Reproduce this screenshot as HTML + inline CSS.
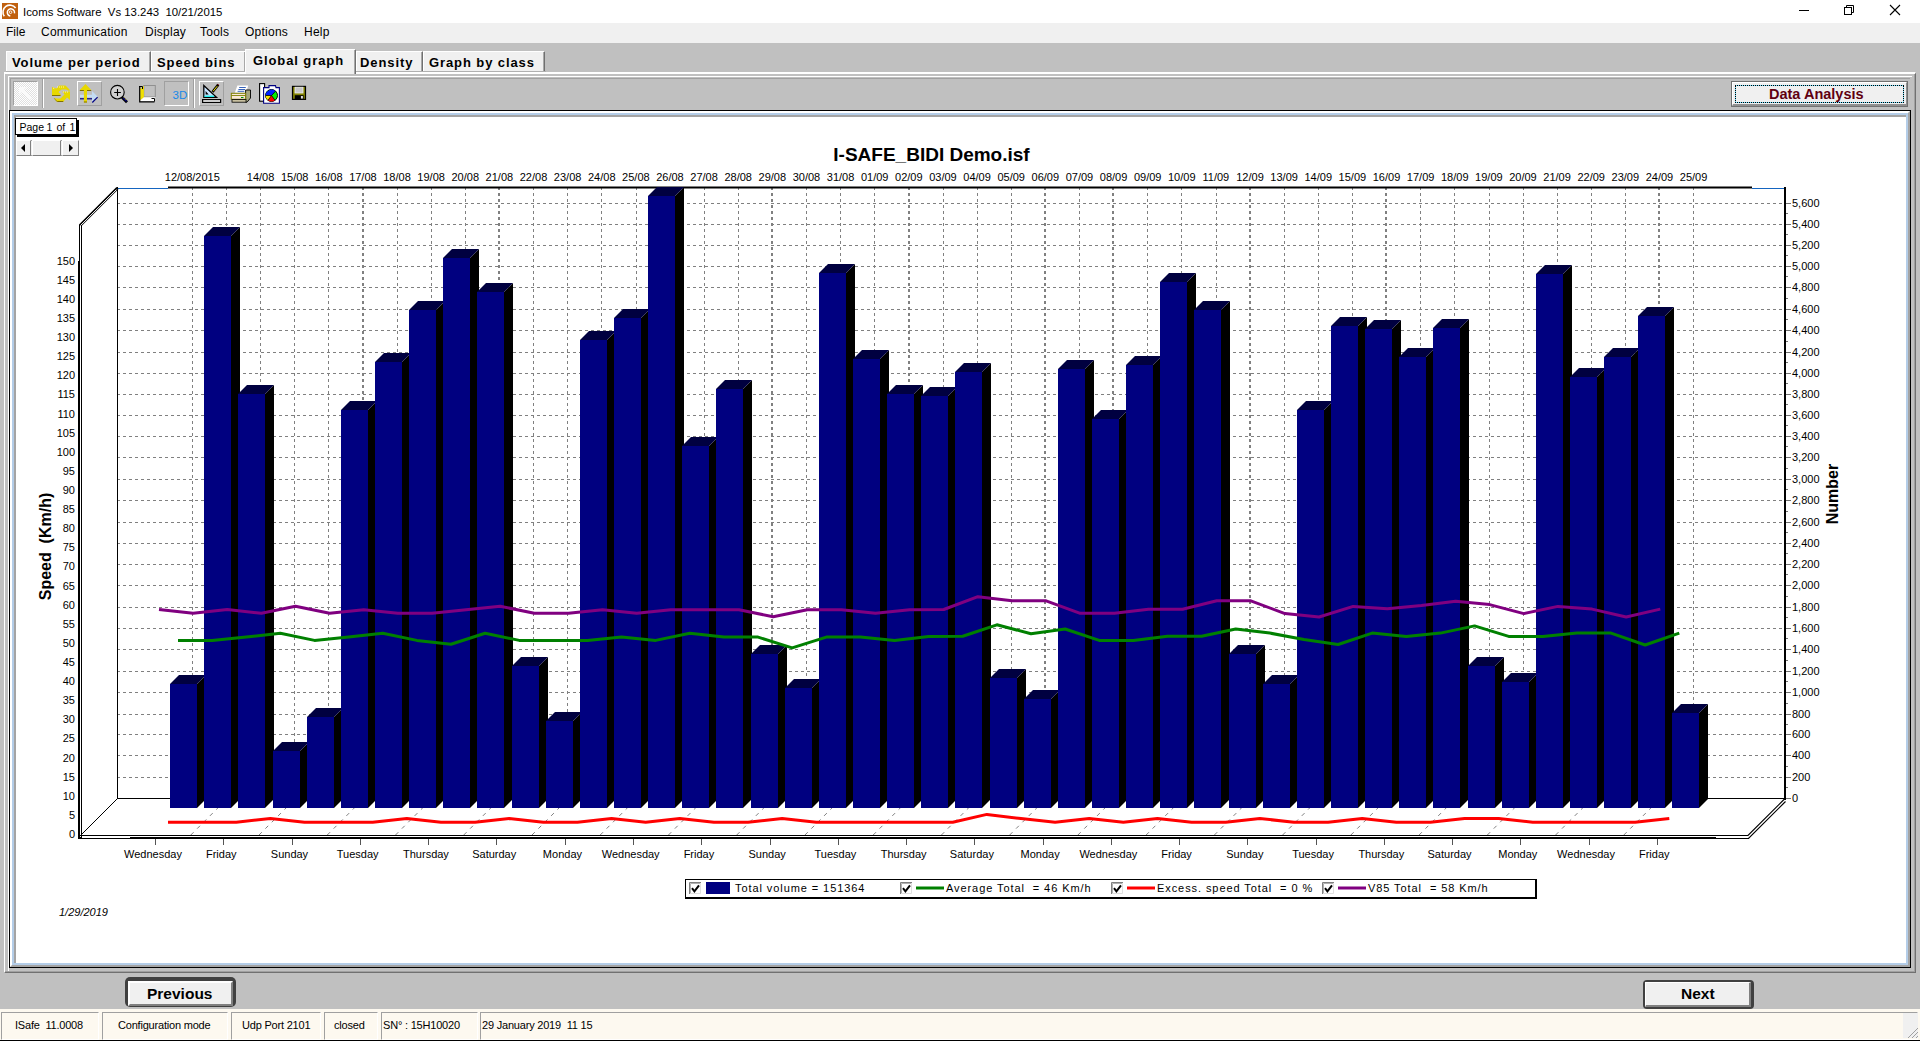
<!DOCTYPE html>
<html><head><meta charset="utf-8">
<style>
html,body{margin:0;padding:0;}
body{width:1920px;height:1041px;position:relative;overflow:hidden;background:#c0c0c0;font-family:"Liberation Sans",sans-serif;}
.a{position:absolute;box-sizing:border-box;}
.txt{position:absolute;white-space:pre;line-height:1;}
#title{left:0;top:0;width:1920px;height:23px;background:#fff;}
#menu{left:0;top:23px;width:1920px;height:20px;background:#f0f0f0;}
.mi{position:absolute;top:25px;font-size:12px;color:#000;white-space:pre;line-height:14px;}
.tab{position:absolute;top:51px;height:21px;background:#f0f0f0;border-top:1px solid #fff;border-left:1px solid #fff;border-right:1px solid #707070;box-shadow:inset -1px 0 0 #a8a8a8;box-sizing:border-box;}
.tabt{position:absolute;font:bold 13px "Liberation Sans",sans-serif;letter-spacing:0.9px;color:#000;white-space:pre;line-height:15px;}
.st{position:absolute;top:1012px;height:28px;border-top:1px solid #a0a0a0;border-left:1px solid #a0a0a0;border-right:1px solid #fff;border-bottom:1px solid #fff;box-sizing:border-box;}
.stt{position:absolute;top:1019px;font-size:11px;letter-spacing:-0.2px;color:#000;white-space:pre;line-height:13px;}
svg text.t{font:11px "Liberation Sans",sans-serif;fill:#000;}
svg text.lg{font:11px "Liberation Sans",sans-serif;fill:#000;letter-spacing:0.92px;white-space:pre;}
svg line.g{stroke:#808080;stroke-width:1;stroke-dasharray:3 3;shape-rendering:crispEdges;}
svg line.tk{stroke:#707070;stroke-width:1;}
svg line.gd{stroke:#808080;stroke-width:1;stroke-dasharray:4 5;}
</style></head>
<body>
<!-- title bar -->
<div class="a" id="title"></div>
<svg class="a" style="left:0;top:0" width="20" height="22">
  <rect x="2" y="3" width="16" height="16" fill="#c0600e"/>
  <path d="M4.3 16.2 A6.9 6.9 0 0 1 15.6 8" fill="none" stroke="#fff" stroke-width="1.6"/>
  <path d="M10.3 16 A3.6 3.6 0 1 1 14.4 13.4" fill="none" stroke="#fff" stroke-width="1.5"/>
  <circle cx="10.6" cy="12.2" r="1.3" fill="none" stroke="#fff" stroke-width="0.9"/>
</svg>
<div class="txt" style="left:23px;top:7px;font-size:11.4px;color:#000">Icoms Software  Vs 13.243  10/21/2015</div>
<svg class="a" style="left:1790px;top:0" width="130" height="23">
  <line x1="9" y1="10.5" x2="19" y2="10.5" stroke="#000" stroke-width="1"/>
  <rect x="54.5" y="7.5" width="7" height="7" fill="none" stroke="#000"/>
  <path d="M56.5 7.5 V5.5 H63.5 V12.5 H61.5" fill="none" stroke="#000"/>
  <path d="M100 5 L110 15 M110 5 L100 15" stroke="#000" stroke-width="1.1"/>
</svg>
<!-- menu -->
<div class="a" id="menu"></div>
<div class="mi" style="left:6px">File</div>
<div class="mi" style="left:41px;letter-spacing:0.25px">Communication</div>
<div class="mi" style="left:145px;letter-spacing:0.25px">Display</div>
<div class="mi" style="left:200px;letter-spacing:0.25px">Tools</div>
<div class="mi" style="left:245px;letter-spacing:0.25px">Options</div>
<div class="mi" style="left:304px;letter-spacing:0.25px">Help</div>

<!-- tab panel outer -->
<div class="a" style="left:4px;top:72px;width:1912px;height:901px;border-top:2px solid #fff;border-left:1px solid #fff;border-right:1px solid #707070;border-bottom:1px solid #707070;background:#c0c0c0"></div>
<div class="a" style="left:5px;top:74px;width:1910px;height:898px;border-right:1px solid #a0a0a0;border-bottom:1px solid #a0a0a0;"></div>
<div class="a" style="left:8px;top:76px;width:1904px;height:895px;border-top:1px solid #fff;border-left:1px solid #fff;"></div>
<div class="a" style="left:10px;top:78px;width:1900px;height:32px;border-top:1px solid #a0a0a0;border-left:1px solid #a0a0a0;"></div>

<!-- tabs -->
<div class="tab" style="left:6px;width:145px"></div>
<div class="tab" style="left:151px;width:95px"></div>
<div class="tab" style="left:356px;width:67px"></div>
<div class="tab" style="left:423px;width:122px"></div>
<div class="a" style="left:6px;top:71px;width:540px;height:1px;background:#b0b0b0"></div>
<div class="a" style="left:245px;top:49px;width:111px;height:25px;background:#f0f0f0;border-top:1px solid #fff;border-left:1px solid #fff;border-right:1px solid #707070;box-shadow:inset -1px 0 0 #a8a8a8"></div>
<div class="tabt" style="left:12px;top:55px">Volume per period</div>
<div class="tabt" style="left:157px;top:55px">Speed bins</div>
<div class="tabt" style="left:253px;top:53px">Global graph</div>
<div class="tabt" style="left:360px;top:55px">Density</div>
<div class="tabt" style="left:429px;top:55px">Graph by class</div>

<!-- toolbar -->
<div class="a" style="left:13px;top:81px;width:25px;height:25px;border-top:1px solid #a0a0a0;border-left:1px solid #a0a0a0;border-right:1px solid #fff;border-bottom:1px solid #fff;background-color:#fff;background-image:repeating-conic-gradient(#e0e0e0 0 25%, #fff 0 50%);background-size:2px 2px"></div>
<svg class="a" style="left:16px;top:84px" width="20" height="20"><path d="M3 3 H11 L8 6 L16 14 L14 16 L6 8 L3 11 Z" fill="#fafafa"/></svg>
<div class="a" style="left:42px;top:79px;width:1px;height:29px;background:#a0a0a0"></div>
<div class="a" style="left:43px;top:79px;width:1px;height:29px;background:#fff"></div>
<div class="a" style="left:77px;top:81px;width:25px;height:25px;border-top:1px solid #fff;border-left:1px solid #fff;border-right:1px solid #a0a0a0;border-bottom:1px solid #a0a0a0;"></div>
<div class="a" style="left:164px;top:81px;width:25px;height:25px;border-top:1px solid #a0a0a0;border-left:1px solid #a0a0a0;border-right:1px solid #fff;border-bottom:1px solid #fff;"></div>
<div class="a" style="left:193px;top:79px;width:1px;height:29px;background:#a0a0a0"></div>
<div class="a" style="left:194px;top:79px;width:1px;height:29px;background:#fff"></div>
<div class="a" style="left:199px;top:81px;width:25px;height:25px;border-top:1px solid #fff;border-left:1px solid #fff;border-right:1px solid #a0a0a0;border-bottom:1px solid #a0a0a0;"></div>
<svg class="a" style="left:0;top:0" width="320" height="115">
  <!-- refresh icon -->
  <path d="M52 87 L56.5 88.5 L59 85.5 L65.5 85.5 L69.5 89.5 L69.5 91 L66 89.5 L61.5 89.5 L58.5 92 L60.5 94 L60.5 96 L52 96 Z" fill="#e8d800"/>
  <path d="M52 95 H60.5 V96 H52 Z" fill="#807000"/>
  <path d="M62 91.5 L70 91.5 L70 100 L67 97.5 L63 102 L57 102 L54 98 L58 98.5 L60.5 98.5 L64.5 94.5 Z" fill="#e8d800"/>
  <path d="M57 101 H63.5 L63 102 H57.5 Z M54 98 L57 101 L56.5 101.5 L53.8 98.3 Z" fill="#807000"/>
  <path d="M53 88 L55 89 M57 87 H65 M63 92 H69" stroke="#fff" stroke-width="0.7" stroke-dasharray="1 1"/>
  <!-- T arrow -->
  <path d="M80 94.8 H92.5 V97.3 H80 Z" fill="#c4dcf4"/>
  <path d="M92 91 L97.7 96.8 L92 102.6 Z" fill="#c4dcf4"/>
  <path d="M80 98.8 H92" stroke="#000080" stroke-width="1.2"/>
  <path d="M97.6 97.2 L92.3 102.5" stroke="#000080" stroke-width="1.2"/>
  <path d="M85.5 84 L79.8 90 H83.9 V102.5 H87 V90 H91.2 Z" fill="#e8d800"/>
  <path d="M79.8 90 H83.9 V91 H79.8 Z M87 90 H91.2 V91 H87 Z M83.9 101.6 H87 V102.6 H83.9 Z" fill="#807000"/>
  <!-- zoom -->
  <circle cx="117.4" cy="92.2" r="6.8" fill="#d0d0d0" stroke="#000" stroke-width="1.1"/>
  <path d="M114.2 92.5 H120.9 M117.5 89 V95.9" stroke="#000" stroke-width="1.1"/>
  <path d="M122 97.2 L127 102.2" stroke="#000" stroke-width="2.8"/>
  <path d="M122.8 97.6 L126.6 101.4" stroke="#000090" stroke-width="1.2"/>
  <path d="M123.6 97.2 L127 100.6" stroke="#e8d800" stroke-width="0.8" stroke-dasharray="0.8 0.8"/>
  <!-- axis icon -->
  <rect x="143.8" y="85.5" width="11.5" height="11.5" fill="none" stroke="#909090" stroke-width="1"/>
  <path d="M140.2 88.7 L143.9 85.8 V97.2 L140.2 100.4 Z" fill="#f0e000"/>
  <path d="M140.2 100.4 L143.9 97.2 H155.5 L154.5 101 H140.2 Z" fill="#fff"/>
  <path d="M139.7 87 V101.8 H154.5" fill="none" stroke="#000" stroke-width="1.2"/>
  <path d="M139 86.5 H142.5 V89 M151.5 98.5 H154.5 V101.5" fill="none" stroke="#000" stroke-width="1"/>
  <!-- 3D -->
  <text x="172.5" y="99" style="font:11.5px 'Liberation Sans',sans-serif;fill:#1888e8">3D</text>
  <!-- set square -->
  <path d="M203.8 85.5 V97.3 H216.5 Z" fill="#c8e4ff" stroke="#000" stroke-width="1.3" stroke-linejoin="miter"/>
  <rect x="204.5" y="95.6" width="9.5" height="1.4" fill="#20f0f0"/>
  <path d="M205.6 91 V94.6 H208.7 Z" fill="#000"/>
  <rect x="202.6" y="99.6" width="18" height="2.8" fill="#fff" stroke="#000" stroke-width="1.2"/>
  <path d="M212.5 92 L218.3 84.6" stroke="#000" stroke-width="2.6"/>
  <path d="M213.2 91.2 L217.2 86.2" stroke="#f0e000" stroke-width="1"/>
  <path d="M217.2 84.2 L219 84.6 L218.4 85.6 Z" fill="#a00000"/>
  <!-- printer -->
  <path d="M237.4 85.6 H248.2 L246.1 92.8 H234.8 Z" fill="#fff"/>
  <path d="M239.2 87.5 H245.8 M238.4 89.5 H245 M237.6 91.3 H244.3" stroke="#2050b0" stroke-width="0.9"/>
  <path d="M245.6 90 H250.5 V98 L247 102.2 H245.6 Z" fill="#a8a880" stroke="#000" stroke-width="0.9"/>
  <rect x="231.3" y="93.3" width="14.3" height="6" fill="#f8e8d8" stroke="#808000" stroke-width="1"/>
  <path d="M231.3 95.5 H245.6" stroke="#808000" stroke-width="0.9"/>
  <path d="M241 97.5 H243.5" stroke="#009000" stroke-width="1"/>
  <rect x="232" y="99.6" width="14" height="2.6" fill="#c8c0a0" stroke="#000" stroke-width="0.8"/>
  <!-- pie icon -->
  <rect x="259.6" y="83.6" width="5" height="17.6" fill="#fff" stroke="#000" stroke-width="1.1"/>
  <path d="M263.6 87.6 H269 V85.6 H275.5 L276 87.6 H279.4 V103.3 H263.6 Z" fill="#fff" stroke="#000080" stroke-width="1.1"/>
  <circle cx="271.5" cy="95.5" r="6" fill="#00f000" stroke="#000" stroke-width="1"/>
  <path d="M271.5 95.5 L265.6 95.5 A6 6 0 0 1 275.6 91.2 Z" fill="#0020ff"/>
  <path d="M271.5 95.5 L275 100.3 A6 6 0 0 1 268 100.3 Z" fill="#ff0000"/>
  <path d="M271.5 95.5 L268 100.3 A6 6 0 0 1 265.6 95.5 Z" fill="#ffe000"/>
  <path d="M265.6 95.5 H271.5 L275.6 91.2 M271.5 95.5 L268 100.3 M271.5 95.5 L275 100.3" fill="none" stroke="#000" stroke-width="0.8"/>
  <!-- floppy -->
  <rect x="292.5" y="86.4" width="13" height="13" fill="#808000" stroke="#000" stroke-width="1.2"/>
  <rect x="295" y="87.2" width="8" height="5.8" fill="#c8c8c8" stroke="#f0f0f0" stroke-width="0.8"/>
  <rect x="294.8" y="95.2" width="8.8" height="4" fill="#000"/>
  <rect x="300.9" y="96" width="2" height="2.6" fill="#e0e0e0"/>
</svg>
<!-- Data Analysis button -->
<div class="a" style="left:1731px;top:81px;width:177px;height:26px;background:#f0f0f0;border:1px solid #707070"></div>
<div class="a" style="left:1732px;top:82px;width:175px;height:24px;border-top:1px solid #fff;border-left:1px solid #fff;border-right:1px solid #909090;border-bottom:2px solid #909090"></div>
<div class="a" style="left:1735px;top:85px;width:169px;height:18px;border:1px solid #70e0ff"></div>
<div class="a" style="left:1735px;top:85px;width:169px;height:18px;border:1px dotted #000"></div>
<div class="txt" style="left:1769px;top:86px;font:bold 14.5px 'Liberation Sans',sans-serif;color:#600010">Data Analysis</div>

<!-- chart panel -->
<div class="a" style="left:9px;top:110px;width:1902px;height:858px;border:1px solid #000;background:#fff"></div>
<div class="a" style="left:10px;top:111px;width:1900px;height:856px;border-top:2px solid #fff;border-left:2px solid #fff;border-right:2px solid #a4a4a4;border-bottom:2px solid #a4a4a4;"></div>
<div class="a" style="left:12px;top:113px;width:1896px;height:852px;border:2px solid #b4cde8;"></div>
<div class="a" style="left:14px;top:115px;width:1892px;height:848px;border-top:2px solid #a4a4a4;border-left:2px solid #a4a4a4;"></div>
<!-- page box -->
<div class="a" style="left:17px;top:120px;width:62px;height:17px;background:#000"></div>
<div class="a" style="left:15px;top:118px;width:62px;height:17px;background:#fff;border:1px solid #000"></div>
<div class="txt" style="left:19.5px;top:122px;font-size:10.5px">Page</div>
<div class="txt" style="left:46.5px;top:122px;font-size:10.5px">1</div>
<div class="txt" style="left:56.5px;top:122px;font-size:10.5px">of</div>
<div class="txt" style="left:69.5px;top:122px;font-size:10.5px">1</div>
<div class="a" style="left:16px;top:140px;width:63px;height:16px;background:#f0f0f0;border:1px solid #a0a0a0"></div>
<div class="a" style="left:16px;top:140px;width:15px;height:16px;background:#f0f0f0;border-top:1px solid #fff;border-left:1px solid #fff;border-right:1px solid #808080;border-bottom:1px solid #808080"></div>
<div class="a" style="left:32px;top:140px;width:29px;height:16px;background:#f0f0f0;border-top:1px solid #fff;border-left:1px solid #fff;border-right:1px solid #808080;border-bottom:1px solid #808080"></div>
<div class="a" style="left:62px;top:140px;width:17px;height:16px;background:#f0f0f0;border-top:1px solid #fff;border-left:1px solid #fff;border-right:1px solid #808080;border-bottom:1px solid #808080"></div>
<svg class="a" style="left:16px;top:140px" width="64" height="16"><path d="M9 4 V12 L5 8 Z M53 4 V12 L57 8 Z" fill="#000"/></svg>

<!-- chart -->
<svg class="a" style="left:0;top:0" width="1920" height="1041">
<line x1="117" y1="777.5" x2="1784" y2="777.5" class="g"/>
<line x1="117" y1="755.5" x2="1784" y2="755.5" class="g"/>
<line x1="117" y1="734.5" x2="1784" y2="734.5" class="g"/>
<line x1="117" y1="714.5" x2="1784" y2="714.5" class="g"/>
<line x1="117" y1="692.5" x2="1784" y2="692.5" class="g"/>
<line x1="117" y1="671.5" x2="1784" y2="671.5" class="g"/>
<line x1="117" y1="649.5" x2="1784" y2="649.5" class="g"/>
<line x1="117" y1="628.5" x2="1784" y2="628.5" class="g"/>
<line x1="117" y1="607.5" x2="1784" y2="607.5" class="g"/>
<line x1="117" y1="585.5" x2="1784" y2="585.5" class="g"/>
<line x1="117" y1="564.5" x2="1784" y2="564.5" class="g"/>
<line x1="117" y1="543.5" x2="1784" y2="543.5" class="g"/>
<line x1="117" y1="522.5" x2="1784" y2="522.5" class="g"/>
<line x1="117" y1="500.5" x2="1784" y2="500.5" class="g"/>
<line x1="117" y1="479.5" x2="1784" y2="479.5" class="g"/>
<line x1="117" y1="457.5" x2="1784" y2="457.5" class="g"/>
<line x1="117" y1="436.5" x2="1784" y2="436.5" class="g"/>
<line x1="117" y1="415.5" x2="1784" y2="415.5" class="g"/>
<line x1="117" y1="394.5" x2="1784" y2="394.5" class="g"/>
<line x1="117" y1="373.5" x2="1784" y2="373.5" class="g"/>
<line x1="117" y1="352.5" x2="1784" y2="352.5" class="g"/>
<line x1="117" y1="330.5" x2="1784" y2="330.5" class="g"/>
<line x1="117" y1="309.5" x2="1784" y2="309.5" class="g"/>
<line x1="117" y1="287.5" x2="1784" y2="287.5" class="g"/>
<line x1="117" y1="266.5" x2="1784" y2="266.5" class="g"/>
<line x1="117" y1="245.5" x2="1784" y2="245.5" class="g"/>
<line x1="117" y1="224.5" x2="1784" y2="224.5" class="g"/>
<line x1="117" y1="203.5" x2="1784" y2="203.5" class="g"/>
<line x1="192.5" y1="187" x2="192.5" y2="798" class="g"/>
<line x1="226.5" y1="187" x2="226.5" y2="798" class="g"/>
<line x1="260.5" y1="187" x2="260.5" y2="798" class="g"/>
<line x1="294.5" y1="187" x2="294.5" y2="798" class="g"/>
<line x1="328.5" y1="187" x2="328.5" y2="798" class="g"/>
<line x1="363.5" y1="187" x2="363.5" y2="798" class="g"/>
<line x1="397.5" y1="187" x2="397.5" y2="798" class="g"/>
<line x1="431.5" y1="187" x2="431.5" y2="798" class="g"/>
<line x1="465.5" y1="187" x2="465.5" y2="798" class="g"/>
<line x1="499.5" y1="187" x2="499.5" y2="798" class="g"/>
<line x1="533.5" y1="187" x2="533.5" y2="798" class="g"/>
<line x1="567.5" y1="187" x2="567.5" y2="798" class="g"/>
<line x1="601.5" y1="187" x2="601.5" y2="798" class="g"/>
<line x1="636.5" y1="187" x2="636.5" y2="798" class="g"/>
<line x1="670.5" y1="187" x2="670.5" y2="798" class="g"/>
<line x1="704.5" y1="187" x2="704.5" y2="798" class="g"/>
<line x1="738.5" y1="187" x2="738.5" y2="798" class="g"/>
<line x1="772.5" y1="187" x2="772.5" y2="798" class="g"/>
<line x1="806.5" y1="187" x2="806.5" y2="798" class="g"/>
<line x1="840.5" y1="187" x2="840.5" y2="798" class="g"/>
<line x1="874.5" y1="187" x2="874.5" y2="798" class="g"/>
<line x1="909.5" y1="187" x2="909.5" y2="798" class="g"/>
<line x1="943.5" y1="187" x2="943.5" y2="798" class="g"/>
<line x1="977.5" y1="187" x2="977.5" y2="798" class="g"/>
<line x1="1011.5" y1="187" x2="1011.5" y2="798" class="g"/>
<line x1="1045.5" y1="187" x2="1045.5" y2="798" class="g"/>
<line x1="1079.5" y1="187" x2="1079.5" y2="798" class="g"/>
<line x1="1113.5" y1="187" x2="1113.5" y2="798" class="g"/>
<line x1="1147.5" y1="187" x2="1147.5" y2="798" class="g"/>
<line x1="1181.5" y1="187" x2="1181.5" y2="798" class="g"/>
<line x1="1216.5" y1="187" x2="1216.5" y2="798" class="g"/>
<line x1="1250.5" y1="187" x2="1250.5" y2="798" class="g"/>
<line x1="1284.5" y1="187" x2="1284.5" y2="798" class="g"/>
<line x1="1318.5" y1="187" x2="1318.5" y2="798" class="g"/>
<line x1="1352.5" y1="187" x2="1352.5" y2="798" class="g"/>
<line x1="1386.5" y1="187" x2="1386.5" y2="798" class="g"/>
<line x1="1420.5" y1="187" x2="1420.5" y2="798" class="g"/>
<line x1="1454.5" y1="187" x2="1454.5" y2="798" class="g"/>
<line x1="1489.5" y1="187" x2="1489.5" y2="798" class="g"/>
<line x1="1523.5" y1="187" x2="1523.5" y2="798" class="g"/>
<line x1="1557.5" y1="187" x2="1557.5" y2="798" class="g"/>
<line x1="1591.5" y1="187" x2="1591.5" y2="798" class="g"/>
<line x1="1625.5" y1="187" x2="1625.5" y2="798" class="g"/>
<line x1="1659.5" y1="187" x2="1659.5" y2="798" class="g"/>
<line x1="1693.5" y1="187" x2="1693.5" y2="798" class="g"/>
<line x1="362.5" y1="187" x2="362.5" y2="798" class="g"/>
<line x1="498.5" y1="187" x2="498.5" y2="798" class="g"/>
<line x1="771.5" y1="187" x2="771.5" y2="798" class="g"/>
<line x1="908.5" y1="187" x2="908.5" y2="798" class="g"/>
<line x1="1044.5" y1="187" x2="1044.5" y2="798" class="g"/>
<line x1="1112.5" y1="187" x2="1112.5" y2="798" class="g"/>
<line x1="1249.5" y1="187" x2="1249.5" y2="798" class="g"/>
<line x1="1385.5" y1="187" x2="1385.5" y2="798" class="g"/>
<line x1="1658.5" y1="187" x2="1658.5" y2="798" class="g"/>
<line x1="190.8" y1="835" x2="218.8" y2="807" class="gd"/>
<line x1="259.04" y1="835" x2="287.04" y2="807" class="gd"/>
<line x1="327.28" y1="835" x2="355.28" y2="807" class="gd"/>
<line x1="395.52" y1="835" x2="423.52" y2="807" class="gd"/>
<line x1="463.76" y1="835" x2="491.76" y2="807" class="gd"/>
<line x1="532" y1="835" x2="560" y2="807" class="gd"/>
<line x1="600.24" y1="835" x2="628.24" y2="807" class="gd"/>
<line x1="668.48" y1="835" x2="696.48" y2="807" class="gd"/>
<line x1="736.72" y1="835" x2="764.72" y2="807" class="gd"/>
<line x1="804.96" y1="835" x2="832.96" y2="807" class="gd"/>
<line x1="873.2" y1="835" x2="901.2" y2="807" class="gd"/>
<line x1="941.44" y1="835" x2="969.44" y2="807" class="gd"/>
<line x1="1009.68" y1="835" x2="1037.68" y2="807" class="gd"/>
<line x1="1077.92" y1="835" x2="1105.92" y2="807" class="gd"/>
<line x1="1146.16" y1="835" x2="1174.16" y2="807" class="gd"/>
<line x1="1214.4" y1="835" x2="1242.4" y2="807" class="gd"/>
<line x1="1282.64" y1="835" x2="1310.64" y2="807" class="gd"/>
<line x1="1350.88" y1="835" x2="1378.88" y2="807" class="gd"/>
<line x1="1419.12" y1="835" x2="1447.12" y2="807" class="gd"/>
<line x1="1487.36" y1="835" x2="1515.36" y2="807" class="gd"/>
<line x1="1555.6" y1="835" x2="1583.6" y2="807" class="gd"/>
<line x1="1623.84" y1="835" x2="1651.84" y2="807" class="gd"/>
<line x1="117.5" y1="187" x2="117.5" y2="799" stroke="#000" stroke-width="1"/>
<line x1="117" y1="798.5" x2="1785" y2="798.5" stroke="#000" stroke-width="1"/>
<line x1="117" y1="188.5" x2="168" y2="188.5" stroke="#1565c0" stroke-width="1"/>
<line x1="168" y1="187.5" x2="1752" y2="187.5" stroke="#000" stroke-width="2"/>
<line x1="1752" y1="188.5" x2="1785" y2="188.5" stroke="#1565c0" stroke-width="1"/>
<line x1="1785" y1="187" x2="1785" y2="800" stroke="#000" stroke-width="2"/>
<path d="M80.5 838 V225 L117.5 188" fill="none" stroke="#000" stroke-width="3"/>
<path d="M80.5 837 V225.6 L116.5 189.6" fill="none" stroke="#fff" stroke-width="1"/>
<line x1="81" y1="835" x2="117.5" y2="798.5" stroke="#000" stroke-width="1"/>
<line x1="79" y1="261" x2="79" y2="839" stroke="#000" stroke-width="2"/>
<path d="M80 835.5 H1748 L1785 798.5" fill="none" stroke="#000" stroke-width="1.2"/>
<path d="M80 838.5 H1748.5 L1785.5 801.5" fill="none" stroke="#000" stroke-width="1.2"/>
<rect x="130" y="837" width="1586" height="2" fill="#000"/>
<line x1="155.5" y1="839" x2="155.5" y2="845" stroke="#555" stroke-width="1"/>
<line x1="223.5" y1="839" x2="223.5" y2="845" stroke="#555" stroke-width="1"/>
<line x1="292.5" y1="839" x2="292.5" y2="845" stroke="#555" stroke-width="1"/>
<line x1="360.5" y1="839" x2="360.5" y2="845" stroke="#555" stroke-width="1"/>
<line x1="428.5" y1="839" x2="428.5" y2="845" stroke="#555" stroke-width="1"/>
<line x1="496.5" y1="839" x2="496.5" y2="845" stroke="#555" stroke-width="1"/>
<line x1="565.5" y1="839" x2="565.5" y2="845" stroke="#555" stroke-width="1"/>
<line x1="633.5" y1="839" x2="633.5" y2="845" stroke="#555" stroke-width="1"/>
<line x1="701.5" y1="839" x2="701.5" y2="845" stroke="#555" stroke-width="1"/>
<line x1="770.5" y1="839" x2="770.5" y2="845" stroke="#555" stroke-width="1"/>
<line x1="838.5" y1="839" x2="838.5" y2="845" stroke="#555" stroke-width="1"/>
<line x1="906.5" y1="839" x2="906.5" y2="845" stroke="#555" stroke-width="1"/>
<line x1="974.5" y1="839" x2="974.5" y2="845" stroke="#555" stroke-width="1"/>
<line x1="1043.5" y1="839" x2="1043.5" y2="845" stroke="#555" stroke-width="1"/>
<line x1="1111.5" y1="839" x2="1111.5" y2="845" stroke="#555" stroke-width="1"/>
<line x1="1179.5" y1="839" x2="1179.5" y2="845" stroke="#555" stroke-width="1"/>
<line x1="1247.5" y1="839" x2="1247.5" y2="845" stroke="#555" stroke-width="1"/>
<line x1="1316.5" y1="839" x2="1316.5" y2="845" stroke="#555" stroke-width="1"/>
<line x1="1384.5" y1="839" x2="1384.5" y2="845" stroke="#555" stroke-width="1"/>
<line x1="1452.5" y1="839" x2="1452.5" y2="845" stroke="#555" stroke-width="1"/>
<line x1="1520.5" y1="839" x2="1520.5" y2="845" stroke="#555" stroke-width="1"/>
<line x1="1589.5" y1="839" x2="1589.5" y2="845" stroke="#555" stroke-width="1"/>
<line x1="1657.5" y1="839" x2="1657.5" y2="845" stroke="#555" stroke-width="1"/>
<line x1="1786" y1="798.5" x2="1791" y2="798.5" class="tk"/>
<line x1="1786" y1="787.5" x2="1788" y2="787.5" class="tk"/>
<line x1="1786" y1="777.5" x2="1791" y2="777.5" class="tk"/>
<line x1="1786" y1="766.5" x2="1788" y2="766.5" class="tk"/>
<line x1="1786" y1="755.5" x2="1791" y2="755.5" class="tk"/>
<line x1="1786" y1="744.5" x2="1788" y2="744.5" class="tk"/>
<line x1="1786" y1="734.5" x2="1791" y2="734.5" class="tk"/>
<line x1="1786" y1="724.5" x2="1788" y2="724.5" class="tk"/>
<line x1="1786" y1="714.5" x2="1791" y2="714.5" class="tk"/>
<line x1="1786" y1="703.5" x2="1788" y2="703.5" class="tk"/>
<line x1="1786" y1="692.5" x2="1791" y2="692.5" class="tk"/>
<line x1="1786" y1="681.5" x2="1788" y2="681.5" class="tk"/>
<line x1="1786" y1="671.5" x2="1791" y2="671.5" class="tk"/>
<line x1="1786" y1="660.5" x2="1788" y2="660.5" class="tk"/>
<line x1="1786" y1="649.5" x2="1791" y2="649.5" class="tk"/>
<line x1="1786" y1="638.5" x2="1788" y2="638.5" class="tk"/>
<line x1="1786" y1="628.5" x2="1791" y2="628.5" class="tk"/>
<line x1="1786" y1="617.5" x2="1788" y2="617.5" class="tk"/>
<line x1="1786" y1="607.5" x2="1791" y2="607.5" class="tk"/>
<line x1="1786" y1="596.5" x2="1788" y2="596.5" class="tk"/>
<line x1="1786" y1="585.5" x2="1791" y2="585.5" class="tk"/>
<line x1="1786" y1="574.5" x2="1788" y2="574.5" class="tk"/>
<line x1="1786" y1="564.5" x2="1791" y2="564.5" class="tk"/>
<line x1="1786" y1="553.5" x2="1788" y2="553.5" class="tk"/>
<line x1="1786" y1="543.5" x2="1791" y2="543.5" class="tk"/>
<line x1="1786" y1="532.5" x2="1788" y2="532.5" class="tk"/>
<line x1="1786" y1="522.5" x2="1791" y2="522.5" class="tk"/>
<line x1="1786" y1="511.5" x2="1788" y2="511.5" class="tk"/>
<line x1="1786" y1="500.5" x2="1791" y2="500.5" class="tk"/>
<line x1="1786" y1="489.5" x2="1788" y2="489.5" class="tk"/>
<line x1="1786" y1="479.5" x2="1791" y2="479.5" class="tk"/>
<line x1="1786" y1="468.5" x2="1788" y2="468.5" class="tk"/>
<line x1="1786" y1="457.5" x2="1791" y2="457.5" class="tk"/>
<line x1="1786" y1="446.5" x2="1788" y2="446.5" class="tk"/>
<line x1="1786" y1="436.5" x2="1791" y2="436.5" class="tk"/>
<line x1="1786" y1="425.5" x2="1788" y2="425.5" class="tk"/>
<line x1="1786" y1="415.5" x2="1791" y2="415.5" class="tk"/>
<line x1="1786" y1="404.5" x2="1788" y2="404.5" class="tk"/>
<line x1="1786" y1="394.5" x2="1791" y2="394.5" class="tk"/>
<line x1="1786" y1="383.5" x2="1788" y2="383.5" class="tk"/>
<line x1="1786" y1="373.5" x2="1791" y2="373.5" class="tk"/>
<line x1="1786" y1="362.5" x2="1788" y2="362.5" class="tk"/>
<line x1="1786" y1="352.5" x2="1791" y2="352.5" class="tk"/>
<line x1="1786" y1="341.5" x2="1788" y2="341.5" class="tk"/>
<line x1="1786" y1="330.5" x2="1791" y2="330.5" class="tk"/>
<line x1="1786" y1="319.5" x2="1788" y2="319.5" class="tk"/>
<line x1="1786" y1="309.5" x2="1791" y2="309.5" class="tk"/>
<line x1="1786" y1="298.5" x2="1788" y2="298.5" class="tk"/>
<line x1="1786" y1="287.5" x2="1791" y2="287.5" class="tk"/>
<line x1="1786" y1="276.5" x2="1788" y2="276.5" class="tk"/>
<line x1="1786" y1="266.5" x2="1791" y2="266.5" class="tk"/>
<line x1="1786" y1="255.5" x2="1788" y2="255.5" class="tk"/>
<line x1="1786" y1="245.5" x2="1791" y2="245.5" class="tk"/>
<line x1="1786" y1="234.5" x2="1788" y2="234.5" class="tk"/>
<line x1="1786" y1="224.5" x2="1791" y2="224.5" class="tk"/>
<line x1="1786" y1="213.5" x2="1788" y2="213.5" class="tk"/>
<line x1="1786" y1="203.5" x2="1791" y2="203.5" class="tk"/>
<polygon points="197,684 206,675 206,799 197,808" fill="#000"/>
<polygon points="170,684 179,675 206,675 197,684" fill="#000040"/>
<rect x="170" y="684" width="27" height="124" fill="#000080"/>
<polygon points="231,236 240,227 240,799 231,808" fill="#000"/>
<polygon points="204,236 213,227 240,227 231,236" fill="#000040"/>
<rect x="204" y="236" width="27" height="572" fill="#000080"/>
<polygon points="265,394 274,385 274,799 265,808" fill="#000"/>
<polygon points="238,394 247,385 274,385 265,394" fill="#000040"/>
<rect x="238" y="394" width="27" height="414" fill="#000080"/>
<polygon points="300,751 309,742 309,799 300,808" fill="#000"/>
<polygon points="273,751 282,742 309,742 300,751" fill="#000040"/>
<rect x="273" y="751" width="27" height="57" fill="#000080"/>
<polygon points="334,717 343,708 343,799 334,808" fill="#000"/>
<polygon points="307,717 316,708 343,708 334,717" fill="#000040"/>
<rect x="307" y="717" width="27" height="91" fill="#000080"/>
<polygon points="368,410 377,401 377,799 368,808" fill="#000"/>
<polygon points="341,410 350,401 377,401 368,410" fill="#000040"/>
<rect x="341" y="410" width="27" height="398" fill="#000080"/>
<polygon points="402,362 411,353 411,799 402,808" fill="#000"/>
<polygon points="375,362 384,353 411,353 402,362" fill="#000040"/>
<rect x="375" y="362" width="27" height="446" fill="#000080"/>
<polygon points="436,310 445,301 445,799 436,808" fill="#000"/>
<polygon points="409,310 418,301 445,301 436,310" fill="#000040"/>
<rect x="409" y="310" width="27" height="498" fill="#000080"/>
<polygon points="470,258 479,249 479,799 470,808" fill="#000"/>
<polygon points="443,258 452,249 479,249 470,258" fill="#000040"/>
<rect x="443" y="258" width="27" height="550" fill="#000080"/>
<polygon points="504,292 513,283 513,799 504,808" fill="#000"/>
<polygon points="477,292 486,283 513,283 504,292" fill="#000040"/>
<rect x="477" y="292" width="27" height="516" fill="#000080"/>
<polygon points="539,666 548,657 548,799 539,808" fill="#000"/>
<polygon points="512,666 521,657 548,657 539,666" fill="#000040"/>
<rect x="512" y="666" width="27" height="142" fill="#000080"/>
<polygon points="573,721 582,712 582,799 573,808" fill="#000"/>
<polygon points="546,721 555,712 582,712 573,721" fill="#000040"/>
<rect x="546" y="721" width="27" height="87" fill="#000080"/>
<polygon points="607,340 616,331 616,799 607,808" fill="#000"/>
<polygon points="580,340 589,331 616,331 607,340" fill="#000040"/>
<rect x="580" y="340" width="27" height="468" fill="#000080"/>
<polygon points="641,318 650,309 650,799 641,808" fill="#000"/>
<polygon points="614,318 623,309 650,309 641,318" fill="#000040"/>
<rect x="614" y="318" width="27" height="490" fill="#000080"/>
<polygon points="675,196 684,187 684,799 675,808" fill="#000"/>
<polygon points="648,196 657,187 684,187 675,196" fill="#000040"/>
<rect x="648" y="196" width="27" height="612" fill="#000080"/>
<polygon points="709,446 718,437 718,799 709,808" fill="#000"/>
<polygon points="682,446 691,437 718,437 709,446" fill="#000040"/>
<rect x="682" y="446" width="27" height="362" fill="#000080"/>
<polygon points="743,389 752,380 752,799 743,808" fill="#000"/>
<polygon points="716,389 725,380 752,380 743,389" fill="#000040"/>
<rect x="716" y="389" width="27" height="419" fill="#000080"/>
<polygon points="778,654 787,645 787,799 778,808" fill="#000"/>
<polygon points="751,654 760,645 787,645 778,654" fill="#000040"/>
<rect x="751" y="654" width="27" height="154" fill="#000080"/>
<polygon points="812,688 821,679 821,799 812,808" fill="#000"/>
<polygon points="785,688 794,679 821,679 812,688" fill="#000040"/>
<rect x="785" y="688" width="27" height="120" fill="#000080"/>
<polygon points="846,273 855,264 855,799 846,808" fill="#000"/>
<polygon points="819,273 828,264 855,264 846,273" fill="#000040"/>
<rect x="819" y="273" width="27" height="535" fill="#000080"/>
<polygon points="880,359 889,350 889,799 880,808" fill="#000"/>
<polygon points="853,359 862,350 889,350 880,359" fill="#000040"/>
<rect x="853" y="359" width="27" height="449" fill="#000080"/>
<polygon points="914,394 923,385 923,799 914,808" fill="#000"/>
<polygon points="887,394 896,385 923,385 914,394" fill="#000040"/>
<rect x="887" y="394" width="27" height="414" fill="#000080"/>
<polygon points="948,396 957,387 957,799 948,808" fill="#000"/>
<polygon points="921,396 930,387 957,387 948,396" fill="#000040"/>
<rect x="921" y="396" width="27" height="412" fill="#000080"/>
<polygon points="982,372 991,363 991,799 982,808" fill="#000"/>
<polygon points="955,372 964,363 991,363 982,372" fill="#000040"/>
<rect x="955" y="372" width="27" height="436" fill="#000080"/>
<polygon points="1017,678 1026,669 1026,799 1017,808" fill="#000"/>
<polygon points="990,678 999,669 1026,669 1017,678" fill="#000040"/>
<rect x="990" y="678" width="27" height="130" fill="#000080"/>
<polygon points="1051,699 1060,690 1060,799 1051,808" fill="#000"/>
<polygon points="1024,699 1033,690 1060,690 1051,699" fill="#000040"/>
<rect x="1024" y="699" width="27" height="109" fill="#000080"/>
<polygon points="1085,369 1094,360 1094,799 1085,808" fill="#000"/>
<polygon points="1058,369 1067,360 1094,360 1085,369" fill="#000040"/>
<rect x="1058" y="369" width="27" height="439" fill="#000080"/>
<polygon points="1119,419 1128,410 1128,799 1119,808" fill="#000"/>
<polygon points="1092,419 1101,410 1128,410 1119,419" fill="#000040"/>
<rect x="1092" y="419" width="27" height="389" fill="#000080"/>
<polygon points="1153,365 1162,356 1162,799 1153,808" fill="#000"/>
<polygon points="1126,365 1135,356 1162,356 1153,365" fill="#000040"/>
<rect x="1126" y="365" width="27" height="443" fill="#000080"/>
<polygon points="1187,282 1196,273 1196,799 1187,808" fill="#000"/>
<polygon points="1160,282 1169,273 1196,273 1187,282" fill="#000040"/>
<rect x="1160" y="282" width="27" height="526" fill="#000080"/>
<polygon points="1221,310 1230,301 1230,799 1221,808" fill="#000"/>
<polygon points="1194,310 1203,301 1230,301 1221,310" fill="#000040"/>
<rect x="1194" y="310" width="27" height="498" fill="#000080"/>
<polygon points="1256,654 1265,645 1265,799 1256,808" fill="#000"/>
<polygon points="1229,654 1238,645 1265,645 1256,654" fill="#000040"/>
<rect x="1229" y="654" width="27" height="154" fill="#000080"/>
<polygon points="1290,684 1299,675 1299,799 1290,808" fill="#000"/>
<polygon points="1263,684 1272,675 1299,675 1290,684" fill="#000040"/>
<rect x="1263" y="684" width="27" height="124" fill="#000080"/>
<polygon points="1324,410 1333,401 1333,799 1324,808" fill="#000"/>
<polygon points="1297,410 1306,401 1333,401 1324,410" fill="#000040"/>
<rect x="1297" y="410" width="27" height="398" fill="#000080"/>
<polygon points="1358,326 1367,317 1367,799 1358,808" fill="#000"/>
<polygon points="1331,326 1340,317 1367,317 1358,326" fill="#000040"/>
<rect x="1331" y="326" width="27" height="482" fill="#000080"/>
<polygon points="1392,329 1401,320 1401,799 1392,808" fill="#000"/>
<polygon points="1365,329 1374,320 1401,320 1392,329" fill="#000040"/>
<rect x="1365" y="329" width="27" height="479" fill="#000080"/>
<polygon points="1426,357 1435,348 1435,799 1426,808" fill="#000"/>
<polygon points="1399,357 1408,348 1435,348 1426,357" fill="#000040"/>
<rect x="1399" y="357" width="27" height="451" fill="#000080"/>
<polygon points="1460,328 1469,319 1469,799 1460,808" fill="#000"/>
<polygon points="1433,328 1442,319 1469,319 1460,328" fill="#000040"/>
<rect x="1433" y="328" width="27" height="480" fill="#000080"/>
<polygon points="1495,666 1504,657 1504,799 1495,808" fill="#000"/>
<polygon points="1468,666 1477,657 1504,657 1495,666" fill="#000040"/>
<rect x="1468" y="666" width="27" height="142" fill="#000080"/>
<polygon points="1529,682 1538,673 1538,799 1529,808" fill="#000"/>
<polygon points="1502,682 1511,673 1538,673 1529,682" fill="#000040"/>
<rect x="1502" y="682" width="27" height="126" fill="#000080"/>
<polygon points="1563,274 1572,265 1572,799 1563,808" fill="#000"/>
<polygon points="1536,274 1545,265 1572,265 1563,274" fill="#000040"/>
<rect x="1536" y="274" width="27" height="534" fill="#000080"/>
<polygon points="1597,377 1606,368 1606,799 1597,808" fill="#000"/>
<polygon points="1570,377 1579,368 1606,368 1597,377" fill="#000040"/>
<rect x="1570" y="377" width="27" height="431" fill="#000080"/>
<polygon points="1631,357 1640,348 1640,799 1631,808" fill="#000"/>
<polygon points="1604,357 1613,348 1640,348 1631,357" fill="#000040"/>
<rect x="1604" y="357" width="27" height="451" fill="#000080"/>
<polygon points="1665,316 1674,307 1674,799 1665,808" fill="#000"/>
<polygon points="1638,316 1647,307 1674,307 1665,316" fill="#000040"/>
<rect x="1638" y="316" width="27" height="492" fill="#000080"/>
<polygon points="1699,713 1708,704 1708,799 1699,808" fill="#000"/>
<polygon points="1672,713 1681,704 1708,704 1699,713" fill="#000040"/>
<rect x="1672" y="713" width="27" height="95" fill="#000080"/>
<polyline points="168,822.3 202.12,822.3 236.24,822.3 270.36,818.5 304.48,822.3 338.6,822.3 372.72,822.3 406.84,818.5 440.96,822.3 475.08,822.3 509.2,818.5 543.32,822.3 577.44,822.3 611.56,818.5 645.68,822.3 679.8,818.5 713.92,822.3 748.04,822.3 782.16,818.5 816.28,822.3 850.4,822.3 884.52,822.3 918.64,822.3 952.76,822.3 986.88,814.4 1021,818.5 1055.12,822.3 1089.24,818.5 1123.36,822.3 1157.48,818.5 1191.6,822.3 1225.72,822.3 1259.84,818.5 1293.96,822.3 1328.08,822.3 1362.2,818.5 1396.32,822.3 1430.44,822.3 1464.56,818.5 1498.68,818.5 1532.8,822.3 1566.92,822.3 1601.04,822.3 1635.16,822.3 1669.28,818.5" fill="none" stroke="#ff0000" stroke-width="3" stroke-linejoin="round"/>
<polyline points="178,640.4 212.12,640.4 246.24,637.1 280.36,633.3 314.48,640.4 348.6,637.1 382.72,633.3 416.84,640.4 450.96,644.2 485.08,633.3 519.2,640.4 553.32,640.4 587.44,640.4 621.56,637.1 655.68,640.4 689.8,633.3 723.92,637.1 758.04,637.1 792.16,647.9 826.28,637.1 860.4,637.1 894.52,640.4 928.64,636.6 962.76,636.25 996.88,624.8 1031,633.75 1065.12,629 1099.24,640.4 1133.36,640.4 1167.48,636.25 1201.6,636.25 1235.72,629 1269.84,633.1 1303.96,639.4 1338.08,644.5 1372.2,633.1 1406.32,636.4 1440.44,633.1 1474.56,625.9 1508.68,636.4 1542.8,636.4 1576.92,633.1 1611.04,633.1 1645.16,645 1679.28,633.1" fill="none" stroke="#008000" stroke-width="3" stroke-linejoin="round"/>
<polyline points="159,609.4 193.12,613.3 227.24,609.4 261.36,613.3 295.48,606.25 329.6,613.3 363.72,609.8 397.84,613.3 431.96,613.3 466.08,609.8 500.2,606.25 534.32,613.3 568.44,613.3 602.56,609.8 636.68,613.3 670.8,609.8 704.92,609.8 739.04,609.8 773.16,616.7 807.28,609.8 841.4,609.8 875.52,613.3 909.64,609.8 943.76,609.5 977.88,596.7 1012,600.8 1046.12,600.8 1080.24,613.3 1114.36,613.3 1148.48,609.2 1182.6,609.2 1216.72,600.8 1250.84,600.8 1284.96,613.6 1319.08,617 1353.2,606.4 1387.32,608.7 1421.44,605.5 1455.56,601.3 1489.68,604.6 1523.8,613.6 1557.92,606.4 1592.04,609.1 1626.16,617 1660.28,609.1" fill="none" stroke="#800080" stroke-width="3" stroke-linejoin="round"/>
<text x="192.3" y="181" text-anchor="middle" class="t">12/08/2015</text>
<text x="260.54" y="181" text-anchor="middle" class="t">14/08</text>
<text x="294.66" y="181" text-anchor="middle" class="t">15/08</text>
<text x="328.78" y="181" text-anchor="middle" class="t">16/08</text>
<text x="362.9" y="181" text-anchor="middle" class="t">17/08</text>
<text x="397.02" y="181" text-anchor="middle" class="t">18/08</text>
<text x="431.14" y="181" text-anchor="middle" class="t">19/08</text>
<text x="465.26" y="181" text-anchor="middle" class="t">20/08</text>
<text x="499.38" y="181" text-anchor="middle" class="t">21/08</text>
<text x="533.5" y="181" text-anchor="middle" class="t">22/08</text>
<text x="567.62" y="181" text-anchor="middle" class="t">23/08</text>
<text x="601.74" y="181" text-anchor="middle" class="t">24/08</text>
<text x="635.86" y="181" text-anchor="middle" class="t">25/08</text>
<text x="669.98" y="181" text-anchor="middle" class="t">26/08</text>
<text x="704.1" y="181" text-anchor="middle" class="t">27/08</text>
<text x="738.22" y="181" text-anchor="middle" class="t">28/08</text>
<text x="772.34" y="181" text-anchor="middle" class="t">29/08</text>
<text x="806.46" y="181" text-anchor="middle" class="t">30/08</text>
<text x="840.58" y="181" text-anchor="middle" class="t">31/08</text>
<text x="874.7" y="181" text-anchor="middle" class="t">01/09</text>
<text x="908.82" y="181" text-anchor="middle" class="t">02/09</text>
<text x="942.94" y="181" text-anchor="middle" class="t">03/09</text>
<text x="977.06" y="181" text-anchor="middle" class="t">04/09</text>
<text x="1011.18" y="181" text-anchor="middle" class="t">05/09</text>
<text x="1045.3" y="181" text-anchor="middle" class="t">06/09</text>
<text x="1079.42" y="181" text-anchor="middle" class="t">07/09</text>
<text x="1113.54" y="181" text-anchor="middle" class="t">08/09</text>
<text x="1147.66" y="181" text-anchor="middle" class="t">09/09</text>
<text x="1181.78" y="181" text-anchor="middle" class="t">10/09</text>
<text x="1215.9" y="181" text-anchor="middle" class="t">11/09</text>
<text x="1250.02" y="181" text-anchor="middle" class="t">12/09</text>
<text x="1284.14" y="181" text-anchor="middle" class="t">13/09</text>
<text x="1318.26" y="181" text-anchor="middle" class="t">14/09</text>
<text x="1352.38" y="181" text-anchor="middle" class="t">15/09</text>
<text x="1386.5" y="181" text-anchor="middle" class="t">16/09</text>
<text x="1420.62" y="181" text-anchor="middle" class="t">17/09</text>
<text x="1454.74" y="181" text-anchor="middle" class="t">18/09</text>
<text x="1488.86" y="181" text-anchor="middle" class="t">19/09</text>
<text x="1522.98" y="181" text-anchor="middle" class="t">20/09</text>
<text x="1557.1" y="181" text-anchor="middle" class="t">21/09</text>
<text x="1591.22" y="181" text-anchor="middle" class="t">22/09</text>
<text x="1625.34" y="181" text-anchor="middle" class="t">23/09</text>
<text x="1659.46" y="181" text-anchor="middle" class="t">24/09</text>
<text x="1693.58" y="181" text-anchor="middle" class="t">25/09</text>
<text x="153" y="858" text-anchor="middle" class="t">Wednesday</text>
<text x="221.24" y="858" text-anchor="middle" class="t">Friday</text>
<text x="289.48" y="858" text-anchor="middle" class="t">Sunday</text>
<text x="357.72" y="858" text-anchor="middle" class="t">Tuesday</text>
<text x="425.96" y="858" text-anchor="middle" class="t">Thursday</text>
<text x="494.2" y="858" text-anchor="middle" class="t">Saturday</text>
<text x="562.44" y="858" text-anchor="middle" class="t">Monday</text>
<text x="630.68" y="858" text-anchor="middle" class="t">Wednesday</text>
<text x="698.92" y="858" text-anchor="middle" class="t">Friday</text>
<text x="767.16" y="858" text-anchor="middle" class="t">Sunday</text>
<text x="835.4" y="858" text-anchor="middle" class="t">Tuesday</text>
<text x="903.64" y="858" text-anchor="middle" class="t">Thursday</text>
<text x="971.88" y="858" text-anchor="middle" class="t">Saturday</text>
<text x="1040.12" y="858" text-anchor="middle" class="t">Monday</text>
<text x="1108.36" y="858" text-anchor="middle" class="t">Wednesday</text>
<text x="1176.6" y="858" text-anchor="middle" class="t">Friday</text>
<text x="1244.84" y="858" text-anchor="middle" class="t">Sunday</text>
<text x="1313.08" y="858" text-anchor="middle" class="t">Tuesday</text>
<text x="1381.32" y="858" text-anchor="middle" class="t">Thursday</text>
<text x="1449.56" y="858" text-anchor="middle" class="t">Saturday</text>
<text x="1517.8" y="858" text-anchor="middle" class="t">Monday</text>
<text x="1586.04" y="858" text-anchor="middle" class="t">Wednesday</text>
<text x="1654.28" y="858" text-anchor="middle" class="t">Friday</text>
<text x="75" y="838" text-anchor="end" class="t">0</text>
<text x="75" y="818.89" text-anchor="end" class="t">5</text>
<text x="75" y="799.78" text-anchor="end" class="t">10</text>
<text x="75" y="780.67" text-anchor="end" class="t">15</text>
<text x="75" y="761.56" text-anchor="end" class="t">20</text>
<text x="75" y="742.45" text-anchor="end" class="t">25</text>
<text x="75" y="723.34" text-anchor="end" class="t">30</text>
<text x="75" y="704.23" text-anchor="end" class="t">35</text>
<text x="75" y="685.12" text-anchor="end" class="t">40</text>
<text x="75" y="666.01" text-anchor="end" class="t">45</text>
<text x="75" y="646.9" text-anchor="end" class="t">50</text>
<text x="75" y="627.79" text-anchor="end" class="t">55</text>
<text x="75" y="608.68" text-anchor="end" class="t">60</text>
<text x="75" y="589.57" text-anchor="end" class="t">65</text>
<text x="75" y="570.46" text-anchor="end" class="t">70</text>
<text x="75" y="551.35" text-anchor="end" class="t">75</text>
<text x="75" y="532.24" text-anchor="end" class="t">80</text>
<text x="75" y="513.13" text-anchor="end" class="t">85</text>
<text x="75" y="494.02" text-anchor="end" class="t">90</text>
<text x="75" y="474.91" text-anchor="end" class="t">95</text>
<text x="75" y="455.8" text-anchor="end" class="t">100</text>
<text x="75" y="436.69" text-anchor="end" class="t">105</text>
<text x="75" y="417.58" text-anchor="end" class="t">110</text>
<text x="75" y="398.47" text-anchor="end" class="t">115</text>
<text x="75" y="379.36" text-anchor="end" class="t">120</text>
<text x="75" y="360.25" text-anchor="end" class="t">125</text>
<text x="75" y="341.14" text-anchor="end" class="t">130</text>
<text x="75" y="322.03" text-anchor="end" class="t">135</text>
<text x="75" y="302.92" text-anchor="end" class="t">140</text>
<text x="75" y="283.81" text-anchor="end" class="t">145</text>
<text x="75" y="264.7" text-anchor="end" class="t">150</text>
<text x="1792" y="801.5" class="t">0</text>
<text x="1792" y="780.5" class="t">200</text>
<text x="1792" y="758.5" class="t">400</text>
<text x="1792" y="737.5" class="t">600</text>
<text x="1792" y="717.5" class="t">800</text>
<text x="1792" y="695.5" class="t">1,000</text>
<text x="1792" y="674.5" class="t">1,200</text>
<text x="1792" y="652.5" class="t">1,400</text>
<text x="1792" y="631.5" class="t">1,600</text>
<text x="1792" y="610.5" class="t">1,800</text>
<text x="1792" y="588.5" class="t">2,000</text>
<text x="1792" y="567.5" class="t">2,200</text>
<text x="1792" y="546.5" class="t">2,400</text>
<text x="1792" y="525.5" class="t">2,600</text>
<text x="1792" y="503.5" class="t">2,800</text>
<text x="1792" y="482.5" class="t">3,000</text>
<text x="1792" y="460.5" class="t">3,200</text>
<text x="1792" y="439.5" class="t">3,400</text>
<text x="1792" y="418.5" class="t">3,600</text>
<text x="1792" y="397.5" class="t">3,800</text>
<text x="1792" y="376.5" class="t">4,000</text>
<text x="1792" y="355.5" class="t">4,200</text>
<text x="1792" y="333.5" class="t">4,400</text>
<text x="1792" y="312.5" class="t">4,600</text>
<text x="1792" y="290.5" class="t">4,800</text>
<text x="1792" y="269.5" class="t">5,000</text>
<text x="1792" y="248.5" class="t">5,200</text>
<text x="1792" y="227.5" class="t">5,400</text>
<text x="1792" y="206.5" class="t">5,600</text>
<text x="931.5" y="161" text-anchor="middle" style="font:bold 19px 'Liberation Sans', sans-serif">I-SAFE_BIDI Demo.isf</text>
<text transform="translate(50.5 546.5) rotate(-90)" text-anchor="middle" style="font:bold 16px 'Liberation Sans', sans-serif;white-space:pre" xml:space="preserve">Speed  (Km/h)</text>
<text transform="translate(1838 494) rotate(-90)" text-anchor="middle" style="font:bold 16px 'Liberation Sans', sans-serif">Number</text>
<text x="59" y="915.5" style="font:italic 11px 'Liberation Sans', sans-serif">1/29/2019</text>
<rect x="685" y="879" width="851" height="19" fill="#fff"/>
<path d="M685 879.5 H1536 M685.5 879 V899" stroke="#000" stroke-width="1"/>
<rect x="685" y="897" width="852" height="2" fill="#000"/>
<rect x="1535" y="879" width="2" height="20" fill="#000"/>
<rect x="689" y="882" width="12" height="12" fill="#fff"/>
<path d="M689.5 894 V882.5 H701" fill="none" stroke="#808080" stroke-width="1"/>
<path d="M690.5 893 V883.5 H700" fill="none" stroke="#b0b0b0" stroke-width="1"/>
<path d="M700.5 883 V893.5 H690" fill="none" stroke="#e0e0e0" stroke-width="1"/>
<path d="M692 888.2 L694.4 891.3 L699 885.3" fill="none" stroke="#000" stroke-width="2"/>
<rect x="706" y="882" width="24" height="12" fill="#000080"/>
<text x="735" y="892" class="lg">Total volume = 151364</text>
<rect x="900" y="882" width="12" height="12" fill="#fff"/>
<path d="M900.5 894 V882.5 H912" fill="none" stroke="#808080" stroke-width="1"/>
<path d="M901.5 893 V883.5 H911" fill="none" stroke="#b0b0b0" stroke-width="1"/>
<path d="M911.5 883 V893.5 H901" fill="none" stroke="#e0e0e0" stroke-width="1"/>
<path d="M903 888.2 L905.4 891.3 L910 885.3" fill="none" stroke="#000" stroke-width="2"/>
<line x1="916" y1="888" x2="944" y2="888" stroke="#008000" stroke-width="3"/>
<text x="946" y="892" class="lg" xml:space="preserve">Average Total  = 46 Km/h</text>
<rect x="1111" y="882" width="12" height="12" fill="#fff"/>
<path d="M1111.5 894 V882.5 H1123" fill="none" stroke="#808080" stroke-width="1"/>
<path d="M1112.5 893 V883.5 H1122" fill="none" stroke="#b0b0b0" stroke-width="1"/>
<path d="M1122.5 883 V893.5 H1112" fill="none" stroke="#e0e0e0" stroke-width="1"/>
<path d="M1114 888.2 L1116.4 891.3 L1121 885.3" fill="none" stroke="#000" stroke-width="2"/>
<line x1="1127" y1="888" x2="1155" y2="888" stroke="#ff0000" stroke-width="3"/>
<text x="1157" y="892" class="lg" xml:space="preserve">Excess. speed Total  = 0 %</text>
<rect x="1322" y="882" width="12" height="12" fill="#fff"/>
<path d="M1322.5 894 V882.5 H1334" fill="none" stroke="#808080" stroke-width="1"/>
<path d="M1323.5 893 V883.5 H1333" fill="none" stroke="#b0b0b0" stroke-width="1"/>
<path d="M1333.5 883 V893.5 H1323" fill="none" stroke="#e0e0e0" stroke-width="1"/>
<path d="M1325 888.2 L1327.4 891.3 L1332 885.3" fill="none" stroke="#000" stroke-width="2"/>
<line x1="1338" y1="888" x2="1366" y2="888" stroke="#800080" stroke-width="3"/>
<text x="1368" y="892" class="lg" xml:space="preserve">V85 Total  = 58 Km/h</text>
</svg>

<!-- buttons -->
<div class="a" style="left:125px;top:977px;width:111px;height:30px;background:#404040;border-radius:5px"></div>
<div class="a" style="left:128px;top:981px;width:105px;height:25px;background:#f0f0f0;border-top:2px solid #fff;border-left:2px solid #fff;border-right:2px solid #808080;border-bottom:2px solid #808080"></div>
<div class="txt" style="left:147px;top:984.5px;font:bold 15.5px 'Liberation Sans',sans-serif">Previous</div>
<div class="a" style="left:1643px;top:980px;width:111px;height:29px;background:#404040;border-radius:4px"></div>
<div class="a" style="left:1645px;top:982px;width:106px;height:25px;background:#f0f0f0;border-top:1px solid #fff;border-left:1px solid #fff;border-right:2px solid #808080;border-bottom:2px solid #808080"></div>
<div class="txt" style="left:1681px;top:984.5px;font:bold 15.5px 'Liberation Sans',sans-serif">Next</div>

<!-- status bar -->
<div class="a" style="left:0;top:1009px;width:1920px;height:32px;background:#fdf9f0"></div>
<div class="a" style="left:0;top:1040px;width:1920px;height:1px;background:#000"></div>
<div class="st" style="left:1px;width:98px"></div>
<div class="st" style="left:102px;width:126px"></div>
<div class="st" style="left:231px;width:90px"></div>
<div class="st" style="left:324px;width:54px"></div>
<div class="st" style="left:381px;width:97px"></div>
<div class="st" style="left:480px;width:1438px"></div>
<div class="stt" style="left:15px">ISafe  11.0008</div>
<div class="stt" style="left:118px">Configuration mode</div>
<div class="stt" style="left:242px">Udp Port 2101</div>
<div class="stt" style="left:334px">closed</div>
<div class="stt" style="left:383px">SN° : 15H10020</div>
<div class="stt" style="left:482px">29 January 2019  11 15</div>
<div class="a" style="left:1903px;top:1013px;width:15px;height:25px;background:#f0f0f0"></div>
<svg class="a" style="left:1900px;top:1024px" width="20" height="16"><path d="M8 14 L18 4 M12 14 L18 8 M16 14 L18 12" stroke="#a0a0a0" stroke-width="1"/></svg>
</body></html>
